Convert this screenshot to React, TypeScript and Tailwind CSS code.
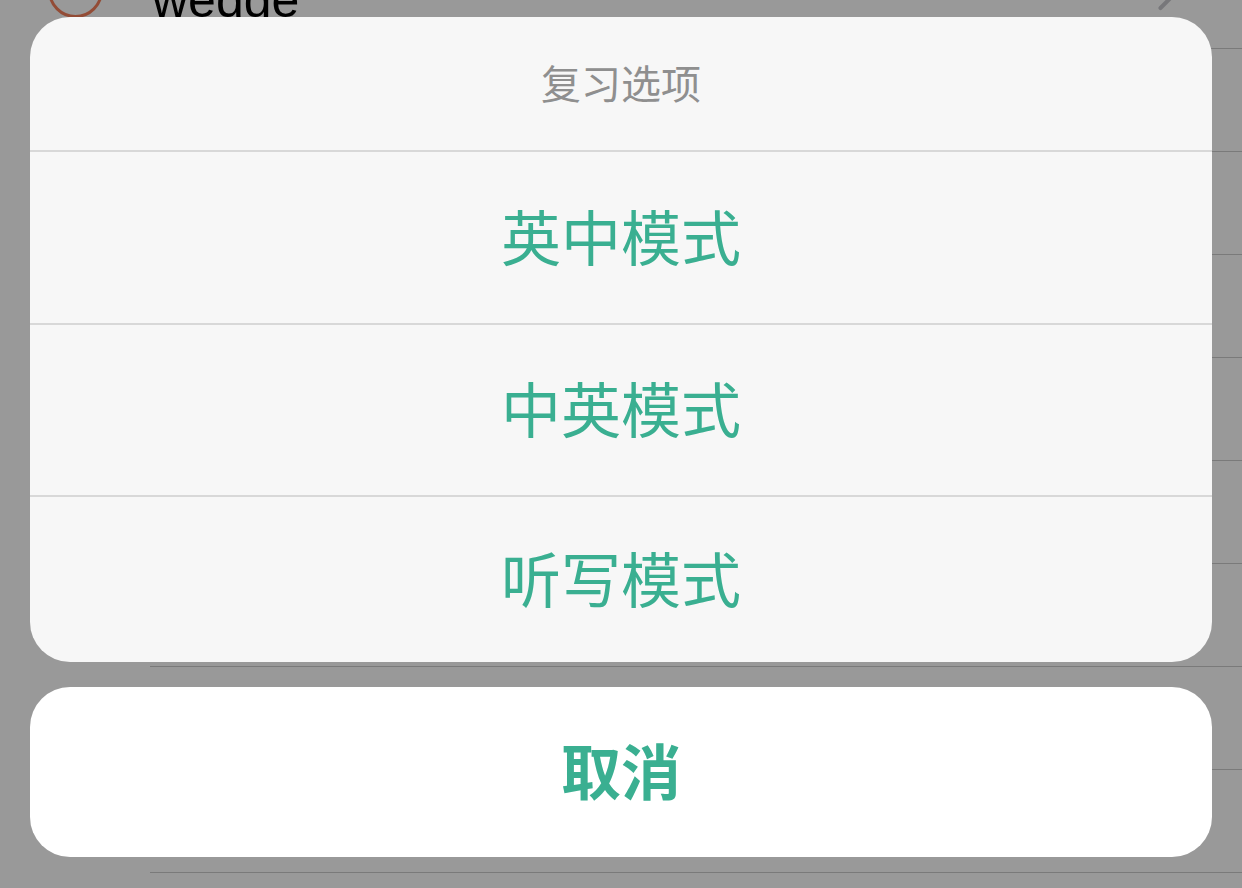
import { ChevronRight } from 'lucide-react';

const CJK = "font-['Noto_Sans_CJK_SC','Noto_Sans',sans-serif]";

const modes = ['英中模式', '中英模式', '听写模式'];

// word list rows sitting behind the sheet; only the first one shows above it
const listRows = 9;

function WordRow({ word }: { word?: string }) {
  return (
    <div>
      <div className="flex h-[102px] items-center">
        {word && (
          <>
            <span className="mb-[13px] ml-[48px] h-[55px] w-[55px] shrink-0 rounded-full border-[3px] border-[#f57f5b]" />
            <span className="ml-[49px] mt-[6px] font-['Liberation_Sans',sans-serif] text-[50px] text-black">
              {word}
            </span>
            <ChevronRight className="ml-auto mr-[54px] h-[44px] w-[44px] text-[#c7c7cc]" strokeWidth={2.2} />
          </>
        )}
      </div>
      <div className="ml-[150px] h-px bg-[#cccccc]" />
    </div>
  );
}

function ActionSheet() {
  return (
    <div className={`absolute inset-x-[30px] bottom-[31px] flex flex-col gap-[25px] ${CJK}`}>
      <div className="overflow-hidden rounded-[40px] bg-[#f7f7f7]">
        <div className="flex h-[133px] items-center justify-center pb-[4px] text-[40px] leading-none text-[#8f8f8f]">
          复习选项
        </div>
        {modes.map((label, i) => (
          <div key={label}>
            <div className="h-[2px] bg-[#d8d8d8]" />
            <button
              type="button"
              className={`flex w-full items-center justify-center pb-[6px] text-[60px] leading-none text-[#3aaf91] ${
                i === modes.length - 1 ? 'h-[165px]' : i === 0 ? 'h-[171px]' : 'h-[170px]'
              }`}
            >
              {label}
            </button>
          </div>
        ))}
      </div>
      <button
        type="button"
        className="flex h-[170px] items-center justify-center rounded-[40px] bg-white pb-[6px] text-[60px] font-bold leading-none text-[#3aaf91]"
      >
        取消
      </button>
    </div>
  );
}

export default function App() {
  return (
    <div className="relative h-[888px] w-[1242px] overflow-hidden bg-white">
      <div className="-mt-[54px]">
        {Array.from({ length: listRows }, (_, i) => (
          <WordRow key={i} word={i === 0 ? 'wedge' : undefined} />
        ))}
      </div>
      <div className="absolute inset-0 bg-black/40" />
      <ActionSheet />
    </div>
  );
}
